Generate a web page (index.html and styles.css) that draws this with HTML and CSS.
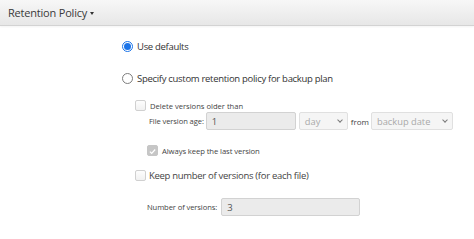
FILE: index.html
```html
<!DOCTYPE html>
<html lang="en">
<head>
<meta charset="UTF-8" />
<title>Retention Policy</title>
<link rel="stylesheet" href="styles.css">
</head>
<body>
  <header class="panel-head">
    <span class="panel-title">Retention Policy</span>
    <span class="caret"></span>
  </header>
  <main class="panel-body">
    <label class="radio-row first">
      <span class="radio checked"></span>
      <span>Use defaults</span>
    </label>
    <label class="radio-row second">
      <span class="radio"></span>
      <span>Specify custom retention policy for backup plan</span>
    </label>

    <div class="sub">
      <label class="check-row delete-old">
        <span class="check"></span>
        <span>Delete versions older than</span>
      </label>
      <div class="field-row age">
        <span class="field-label">File version age:</span>
        <span class="input age-input">1</span>
        <span class="select day-select">day<span class="chev"></span></span>
        <span class="from">from</span>
        <span class="select date-select">backup date<span class="chev"></span></span>
      </div>
      <label class="check-row keep-last">
        <span class="check disabled">
          <svg viewBox="0 0 11 11" width="11" height="11"><path d="M2.3 5.6 L4.5 7.8 L8.8 3.1" fill="none" stroke="#fff" stroke-width="1.5"/></svg>
        </span>
        <span>Always keep the last version</span>
      </label>
      <label class="check-row keep-num">
        <span class="check"></span>
        <span>Keep number of versions (for each file)</span>
      </label>
      <div class="field-row num">
        <span class="field-label">Number of versions:</span>
        <span class="input num-input">3</span>
      </div>
    </div>
  </main>
</body>
</html>
```

FILE: styles.css
```css
* {
  box-sizing: border-box;
}
body {
  margin: 0;
  width: 474px;
  height: 239px;
  background: #ffffff;
  font-family: "Open Sans", "Liberation Sans", sans-serif;
  color: #333333;
  overflow: hidden;
}
.panel-head {
  height: 26px;
  display: flex;
  align-items: center;
  padding-left: 8px;
  background: linear-gradient(#f7f7f7, #e7e7e7);
  border-bottom: 1px solid #d3d3d3;
  box-shadow: 0 1px 2px rgba(0,0,0,0.05);
}
.panel-title {
  font-size: 11px;
  letter-spacing: -0.2px;
  color: #3a3a3a;
}
.caret {
  margin-left: 3px;
  margin-top: 2px;
  border-left: 2.5px solid transparent;
  border-right: 2.5px solid transparent;
  border-top: 3px solid #333;
}
.panel-body {
  padding-left: 122px;
}
.radio-row {
  display: flex;
  align-items: center;
  gap: 4px;
  height: 16px;
  font-size: 9.5px;
  letter-spacing: -0.3px;
  color: #333;
}
.radio-row.first {
  margin-top: 12px;
}
.radio-row.second {
  margin-top: 16px;
}
.radio {
  width: 11px;
  height: 11px;
  flex: none;
  border-radius: 50%;
  border: 1px solid #7d7d7d;
  background: #fff;
  display: flex;
  align-items: center;
  justify-content: center;
}
.radio.checked {
  border-color: #1a73e8;
}
.radio.checked::after {
  content: "";
  width: 7px;
  height: 7px;
  border-radius: 50%;
  background: #1a73e8;
}
.sub {
  padding-left: 13px;
}
.check-row {
  display: flex;
  align-items: center;
  height: 11px;
  color: #444;
}
.check {
  width: 11px;
  height: 11px;
  flex: none;
  border: 1px solid #d0d0d0;
  border-radius: 2px;
  background: linear-gradient(#fdfdfd, #f1f1f1);
  display: flex;
}
.check.disabled {
  background: #c6c6c6;
  border-color: #c6c6c6;
}
.check-row.delete-old {
  margin-top: 14px;
  gap: 4px;
  font-size: 7.6px;
}
.check-row.keep-last {
  margin-top: 15px;
  padding-left: 12px;
  gap: 4px;
  font-size: 7.7px;
  letter-spacing: -0.1px;
}
.check-row.keep-num {
  margin-top: 14px;
  gap: 3px;
  font-size: 9.5px;
  letter-spacing: -0.3px;
}
.field-row {
  display: flex;
  align-items: center;
  color: #444;
}
.field-row.age {
  margin-top: 1px;
  padding-left: 14px;
}
.field-row.num {
  margin-top: 17px;
  padding-left: 12px;
}
.field-label {
  font-size: 7.6px;
  letter-spacing: -0.1px;
}
.age .field-label {
  margin-right: 2px;
}
.num .field-label {
  margin-right: 4px;
}
.from {
  font-size: 8px;
  margin: 0 2px 0 3px;
}
.input {
  height: 18px;
  border: 1px solid #d2d2d2;
  border-radius: 2px;
  background: #ebebeb;
  font-size: 9.5px;
  color: #555;
  padding-left: 5px;
  display: flex;
  align-items: center;
}
.age-input {
  width: 90px;
}
.num-input {
  width: 139px;
}
.select {
  height: 18px;
  border: 1px solid #e0e0e0;
  border-radius: 2px;
  background: #f5f5f5;
  font-size: 9.3px;
  color: #a9a9a9;
  padding: 0 5px 0 5px;
  display: flex;
  align-items: center;
  justify-content: space-between;
}
.day-select {
  width: 49px;
  margin-left: 3px;
}
.date-select {
  width: 82px;
}
.chev {
  width: 4px;
  height: 4px;
  border-right: 1px solid #7a7a7a;
  border-bottom: 1px solid #7a7a7a;
  transform: rotate(45deg);
  margin-top: -3px;
}
```
